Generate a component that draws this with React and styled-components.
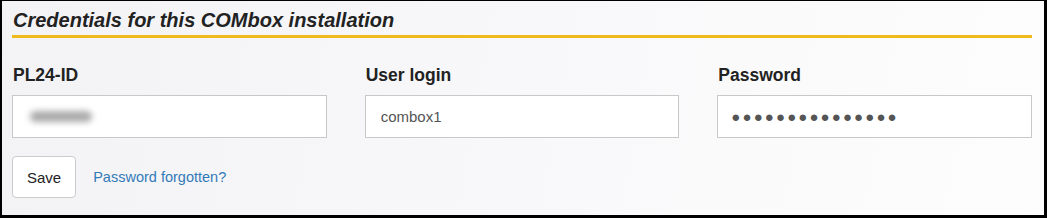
import styled, { createGlobalStyle } from "styled-components";

const GlobalStyle = createGlobalStyle`
  html, body {
    margin: 0;
    padding: 0;
  }
  body {
    font-family: "Liberation Sans", Arial, sans-serif;
  }
`;

const Frame = styled.div`
  box-sizing: border-box;
  width: 1047px;
  height: 218px;
  border: solid #000;
  border-width: 1px 3px 3px 2px;
  background: linear-gradient(100deg, #f3f3f6 0%, #f8f8fa 50%, #fdfdfd 100%);
  padding: 8px 12px 0 10px;
`;

const Title = styled.h3`
  margin: 0;
  padding: 0 0 4px 1px;
  font-size: 20px;
  font-weight: bold;
  font-style: italic;
  color: #222;
  border-bottom: 3px solid #f0ba1c;
  line-height: 22px;
`;

const Fields = styled.div`
  display: grid;
  grid-template-columns: repeat(3, 1fr);
  column-gap: 38px;
  margin-top: 27px;
`;

const Field = styled.div`
  display: flex;
  flex-direction: column;
`;

const Label = styled.label`
  font-size: 17.5px;
  font-weight: bold;
  color: #222;
  line-height: 21px;
  padding-left: 1px;
  margin-bottom: 9px;
`;

const Input = styled.div`
  box-sizing: border-box;
  height: 43px;
  background: #fff;
  border: 1px solid #c8c8c8;
  display: flex;
  align-items: center;
  padding-left: 15px;
  font-size: 15px;
  color: #555;
`;

const Blurred = styled.span`
  display: inline-block;
  width: 62px;
  height: 11px;
  margin-left: 2px;
  border-radius: 6px;
  background: #aaa;
  filter: blur(3px);
`;

const Dots = styled.span`
  font-size: 15px;
  letter-spacing: 2.1px;
  color: #555;
  margin-left: -2px;
`;

const Actions = styled.div`
  display: flex;
  align-items: center;
  gap: 17px;
  margin-top: 18px;
`;

const Button = styled.button`
  box-sizing: border-box;
  height: 42px;
  padding: 0 14px;
  background: #fff;
  border: 1px solid #ccc;
  border-radius: 4px;
  font-family: "Liberation Sans", Arial, sans-serif;
  font-size: 15px;
  color: #222;
`;

const Link = styled.a`
  font-size: 14.5px;
  color: #337ab7;
  text-decoration: none;
`;

export default function App() {
  return (
    <>
      <GlobalStyle />
      <Frame>
        <Title>Credentials for this COMbox installation</Title>
        <Fields>
          <Field>
            <Label>PL24-ID</Label>
            <Input>
              <Blurred />
            </Input>
          </Field>
          <Field>
            <Label>User login</Label>
            <Input>combox1</Input>
          </Field>
          <Field>
            <Label>Password</Label>
            <Input>
              <Dots>●●●●●●●●●●●●●●●</Dots>
            </Input>
          </Field>
        </Fields>
        <Actions>
          <Button>Save</Button>
          <Link href="#">Password forgotten?</Link>
        </Actions>
      </Frame>
    </>
  );
}
